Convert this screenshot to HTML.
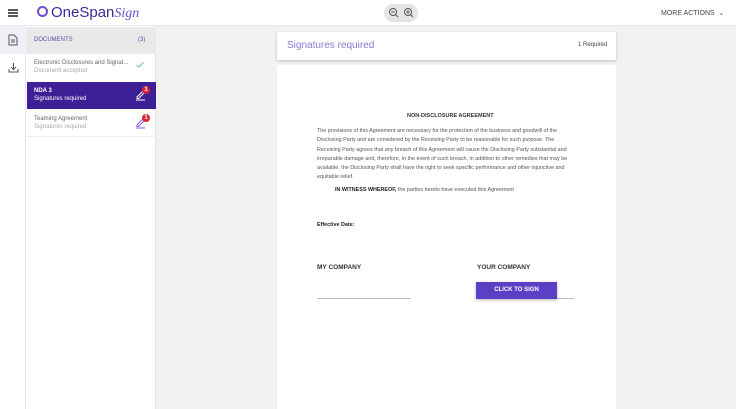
<!DOCTYPE html>
<html><head><style>
*{margin:0;padding:0;box-sizing:border-box}
body{width:736px;height:409px;overflow:hidden;background:#f1f1f1;font-family:"Liberation Sans",sans-serif;position:relative}
.hdr{position:absolute;left:0;top:0;width:736px;height:26px;background:#fff;border-bottom:1px solid #e6e6e6}
.rail{position:absolute;left:0;top:26px;width:26px;height:383px;background:#fff;border-right:1px solid #e6e6e6}
.side{position:absolute;left:26px;top:26px;width:130px;height:383px;background:#fff;border-right:1px solid #e0e0e0}
.abs{position:absolute}
.t{position:absolute;white-space:nowrap}
</style></head><body>
<div class="hdr">
 <div class="abs" style="left:8px;top:9px;width:10px;height:1.5px;background:#555"></div>
 <div class="abs" style="left:8px;top:12px;width:10px;height:1.5px;background:#555"></div>
 <div class="abs" style="left:8px;top:15px;width:10px;height:1.5px;background:#555"></div>
 <div class="abs" style="left:37px;top:6px;width:11px;height:11px;border-radius:50%;border:2.5px solid #6a4fd0"></div>
 <div class="t" style="left:51px;top:4px;font-size:15px;color:#3b2a9a">OneSpan<span style="font-family:'Liberation Serif',serif;font-style:italic;color:#6a4fd0;font-size:14px">Sign</span></div>
 <div class="abs" style="left:384px;top:4px;width:34px;height:18px;border-radius:9px;background:#e4e4e4"></div>
 <svg class="abs" style="left:388px;top:7px" width="28" height="12" viewBox="0 0 28 12" fill="none" stroke="#555" stroke-width="1">
  <circle cx="5" cy="5" r="3.5"/><path d="M7.5 7.5L10 10M3.3 5h3.4"/>
  <circle cx="20" cy="5" r="3.5"/><path d="M22.5 7.5L25 10M18.3 5h3.4M20 3.3v3.4"/>
 </svg>
 <div class="t" style="left:661px;top:9px;font-size:7px;color:#444">MORE ACTIONS &nbsp;⌄</div>
</div>
<div class="rail">
 <div class="abs" style="left:0;top:0;width:26px;height:28px;background:#f0eff8"></div>
 <svg class="abs" style="left:8px;top:8px" width="10" height="12" viewBox="0 0 10 12" fill="none" stroke="#555" stroke-width="1"><path d="M1 1h5l3 3v7H1z M3 6h4M3 8h4"/></svg>
 <svg class="abs" style="left:8px;top:37px" width="11" height="10" viewBox="0 0 11 10" fill="none" stroke="#555" stroke-width="1"><path d="M5.5 0v6M3 4l2.5 2.5L8 4M1 6v3h9V6"/></svg>
</div>
<div class="side">
 <div class="abs" style="left:0;top:1px;width:130px;height:27px;background:#e9e9e9"></div>
 <div class="t" style="left:8px;top:11px;font-size:6px;color:#5a4bb0">DOCUMENTS</div>
 <div class="t" style="left:112px;top:11px;font-size:6px;color:#5a4bb0">(3)</div>
 <div class="t" style="left:8px;top:34px;font-size:6px;color:#666">Electronic Disclosures and Signat...</div>
 <div class="t" style="left:8px;top:42px;font-size:6px;color:#aaa">Document accepted</div>
 <svg class="abs" style="left:110px;top:36px" width="8" height="6" viewBox="0 0 8 6" fill="none" stroke="#6cc4a0" stroke-width="1"><path d="M0.5 3l2 2L7.5 0.5"/></svg>
 <div class="abs" style="left:1px;top:56px;width:129px;height:27px;background:#3d1f96"></div>
 <div class="t" style="left:8px;top:62px;font-size:6px;color:#fff;font-weight:bold">NDA 3</div>
 <div class="t" style="left:8px;top:70px;font-size:6px;color:#fff">Signatures required</div>
 <svg class="abs" style="left:109px;top:63px" width="11" height="12" viewBox="0 0 11 12" fill="none" stroke="#fff" stroke-width="1"><path d="M2 8l6-6 1.5 1.5-6 6H2z M1 11h9"/></svg>
 <div class="abs" style="left:116px;top:60px;width:8px;height:8px;border-radius:50%;background:#d62430;color:#fff;font-size:6px;text-align:center;line-height:8px;font-weight:bold">1</div>
 <div class="t" style="left:8px;top:90px;font-size:6px;color:#666">Teaming Agreement</div>
 <div class="t" style="left:8px;top:98px;font-size:6px;color:#aaa">Signatures required</div>
 <svg class="abs" style="left:109px;top:91px" width="11" height="12" viewBox="0 0 11 12" fill="none" stroke="#7a5fd8" stroke-width="1"><path d="M2 8l6-6 1.5 1.5-6 6H2z M1 11h9"/></svg>
 <div class="abs" style="left:116px;top:88px;width:8px;height:8px;border-radius:50%;background:#d62430;color:#fff;font-size:6px;text-align:center;line-height:8px;font-weight:bold">1</div>
 <div class="abs" style="left:1px;top:110px;width:129px;height:1px;background:#eee"></div>
</div>
<div class="abs" style="left:277px;top:32px;width:339px;height:28px;background:#fff;box-shadow:0 1px 3px rgba(0,0,0,.2)"></div>
<div class="t" style="left:287px;top:40px;font-size:10px;color:#8a7ad8">Signatures required</div>
<div class="t" style="left:578px;top:42px;font-size:6px;color:#444">1 Required</div>
<div class="abs" style="left:277px;top:65px;width:339px;height:344px;background:#fff"></div>
<div class="t" style="left:407px;top:113px;font-size:5.5px;color:#333;font-weight:bold">NON-DISCLOSURE AGREEMENT</div>
<div class="abs" style="left:317px;top:127px;width:258px;font-size:5.4px;line-height:9.3px;color:#555">The provisions of this Agreement are necessary for the protection of the business and goodwill of the Disclosing Party and are considered by the Receiving Party to be reasonable for such purpose. The Receiving Party agrees that any breach of this Agreement will cause the Disclosing Party substantial and irreparable damage and, therefore, in the event of such breach, in addition to other remedies that may be available, the Disclosing Party shall have the right to seek specific performance and other injunctive and equitable relief.</div>
<div class="t" style="left:335px;top:187px;font-size:5.4px;color:#555"><b style="color:#222">IN WITNESS WHEREOF,</b> the parties hereto have executed this Agreement</div>
<div class="t" style="left:317px;top:222px;font-size:5.4px;color:#222;font-weight:bold">Effective Date:</div>
<div class="t" style="left:317px;top:264px;font-size:6.5px;color:#333;font-weight:bold">MY COMPANY</div>
<div class="t" style="left:477px;top:264px;font-size:6.5px;color:#333;font-weight:bold">YOUR COMPANY</div>
<div class="abs" style="left:317px;top:298px;width:94px;height:1px;background:#bbb"></div>
<div class="abs" style="left:476px;top:298px;width:98px;height:1px;background:#bbb"></div>
<div class="abs" style="left:476px;top:282px;width:81px;height:17px;background:#5b3fc4;box-shadow:0 1px 3px rgba(0,0,0,.3);color:#fff;font-size:6px;font-weight:bold;text-align:center;line-height:17px">CLICK TO SIGN</div>
</body></html>
